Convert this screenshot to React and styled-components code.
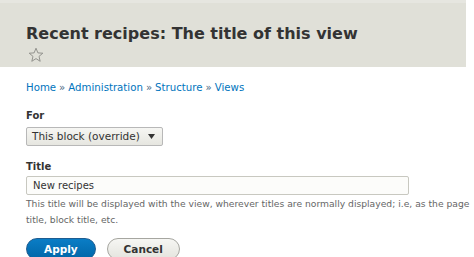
import React from "react";
import styled, { createGlobalStyle } from "styled-components";

const GlobalStyle = createGlobalStyle`
  html, body {
    margin: 0;
    padding: 0;
    background: #fff;
    overflow: hidden;
  }
  body {
    font-family: "DejaVu Sans", "Liberation Sans", sans-serif;
    color: #333;
  }
`;

const Page = styled.div`
  width: 474px;
  height: 257px;
  overflow: hidden;
`;

const Header = styled.div`
  width: 466px;
  height: 67px;
  box-sizing: border-box;
  background: #e0e0d8;
  border-top: 3px solid #e6e6e0;
  padding: 21px 0 0 26px;
`;

const Title = styled.h1`
  margin: 0;
  font-size: 16px;
  line-height: 20px;
  font-weight: bold;
  color: #333;
  white-space: nowrap;
`;

const Star = styled.svg`
  display: block;
  margin: 3px 0 0 2px;
`;

const Content = styled.div`
  width: 500px;
  padding: 14px 0 0 26px;
`;

const Breadcrumb = styled.div`
  font-size: 10.2px;
  line-height: 14px;
  color: #0074bd;
  margin-bottom: 14px;
`;

const Sep = styled.span`
  color: #4a6a86;
  margin: 0 3px;
`;

const Field = styled.div`
  margin-bottom: ${(p) => p.$gap ?? 14}px;
`;

const Label = styled.div`
  font-size: 10px;
  line-height: 14px;
  font-weight: bold;
  color: #333;
  margin-bottom: 2px;
`;

const Select = styled.div`
  display: inline-flex;
  align-items: center;
  gap: 8px;
  height: 19px;
  box-sizing: border-box;
  padding: 0 7px 0 5px;
  border: 1px solid #b8b8b8;
  border-radius: 2px;
  background: linear-gradient(#f6f6f3, #e6e6e0);
  font-size: 10.5px;
  color: #333;
`;

const Input = styled.div`
  width: 383px;
  height: 19px;
  box-sizing: border-box;
  border: 1px solid #c8c8c0;
  border-radius: 2px;
  background: #fcfcfa;
  padding: 0 0 0 6px;
  font-size: 10px;
  line-height: 17px;
  color: #333;
`;

const Description = styled.div`
  font-size: 9.2px;
  line-height: 16px;
  color: #666;
  width: 460px;
  margin-top: 1px;
`;

const Actions = styled.div`
  display: flex;
  gap: 11px;
  margin-top: 10px;
`;

const Button = styled.div`
  display: flex;
  align-items: center;
  justify-content: center;
  height: 22px;
  box-sizing: border-box;
  border-radius: 12px;
  font-size: 10.5px;
  font-weight: bold;
  padding: 0 ${(p) => (p.$primary ? 17 : 16)}px;
  color: ${(p) => (p.$primary ? "#fff" : "#333")};
  background: ${(p) =>
    p.$primary
      ? "linear-gradient(#0a7dc6, #0066a8)"
      : "linear-gradient(#f6f6f3, #e4e4de)"};
  border: 1px solid ${(p) => (p.$primary ? "#1e5c90" : "#a6a6a0")};
`;

export default function App() {
  return (
    <Page>
      <GlobalStyle />
      <Header>
        <Title>Recent recipes: The title of this view</Title>
        <Star width="16" height="16" viewBox="0 0 16 16">
          <path
            d="M8 1.2 L9.9 5.9 L14.8 6.2 L11 9.4 L12.2 14.3 L8 11.6 L3.8 14.3 L5 9.4 L1.2 6.2 L6.1 5.9 Z"
            fill="none"
            stroke="#8a8a86"
            strokeWidth="0.9"
            strokeLinejoin="round"
          />
        </Star>
      </Header>
      <Content>
        <Breadcrumb>
          Home<Sep>»</Sep>Administration<Sep>»</Sep>Structure<Sep>»</Sep>Views
        </Breadcrumb>
        <Field>
          <Label>For</Label>
          <Select>
            This block (override)
            <svg width="7" height="5" viewBox="0 0 7 5">
              <path d="M0 0 H7 L3.5 5 Z" fill="#333" />
            </svg>
          </Select>
        </Field>
        <Field $gap={0}>
          <Label>Title</Label>
          <Input>New recipes</Input>
          <Description>
            This title will be displayed with the view, wherever titles are
            normally displayed; i.e, as the page title, block title, etc.
          </Description>
        </Field>
        <Actions>
          <Button $primary>Apply</Button>
          <Button>Cancel</Button>
        </Actions>
      </Content>
    </Page>
  );
}
